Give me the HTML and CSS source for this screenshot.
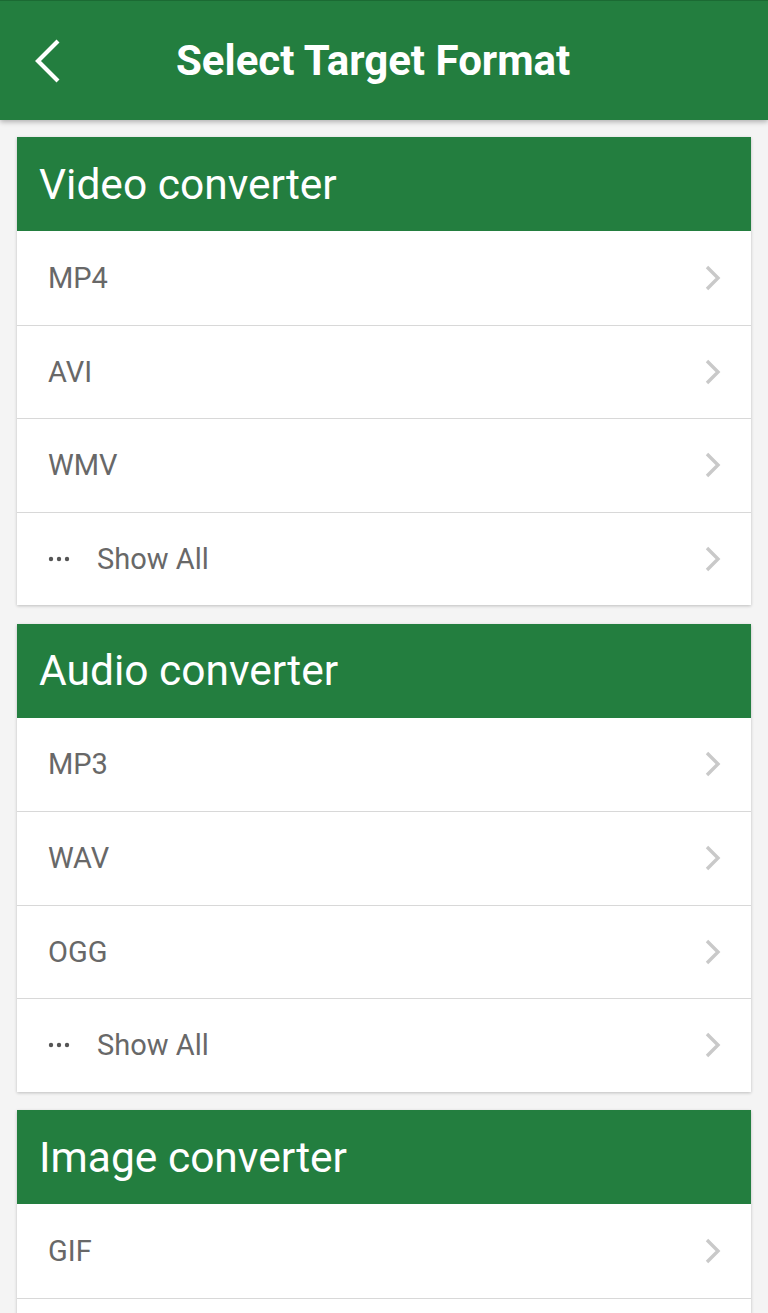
FILE: index.html
```html
<!DOCTYPE html>
<html>
<head>
<meta charset="utf-8">
<link rel="stylesheet" href="styles.css">
</head>
<body>
<header class="appbar">
  <svg class="back" width="30" height="48" viewBox="0 0 30 48"><polyline points="25,4 5,24 25,44" fill="none" stroke="#fff" stroke-width="4.2" stroke-linecap="butt" stroke-linejoin="miter"/></svg>
  <h1 class="title">Select Target Format</h1>
</header>
<main class="content">
  <section class="card">
    <h2 class="card-head">Video converter</h2>
    <div class="row"><span class="label">MP4</span><svg class="chev" viewBox="0 0 18 28"><polyline points="3,3 14,14 3,25" fill="none" stroke="#c9c9c9" stroke-width="3.4"/></svg></div>
    <div class="row"><span class="label">AVI</span><svg class="chev" viewBox="0 0 18 28"><polyline points="3,3 14,14 3,25" fill="none" stroke="#c9c9c9" stroke-width="3.4"/></svg></div>
    <div class="row"><span class="label">WMV</span><svg class="chev" viewBox="0 0 18 28"><polyline points="3,3 14,14 3,25" fill="none" stroke="#c9c9c9" stroke-width="3.4"/></svg></div>
    <div class="row"><svg class="dots" viewBox="0 0 22 6"><circle cx="3" cy="3" r="2.2" fill="#555"/><circle cx="11" cy="3" r="2.2" fill="#555"/><circle cx="19" cy="3" r="2.2" fill="#555"/></svg><span class="label">Show All</span><svg class="chev" viewBox="0 0 18 28"><polyline points="3,3 14,14 3,25" fill="none" stroke="#c9c9c9" stroke-width="3.4"/></svg></div>
  </section>
  <section class="card">
    <h2 class="card-head">Audio converter</h2>
    <div class="row"><span class="label">MP3</span><svg class="chev" viewBox="0 0 18 28"><polyline points="3,3 14,14 3,25" fill="none" stroke="#c9c9c9" stroke-width="3.4"/></svg></div>
    <div class="row"><span class="label">WAV</span><svg class="chev" viewBox="0 0 18 28"><polyline points="3,3 14,14 3,25" fill="none" stroke="#c9c9c9" stroke-width="3.4"/></svg></div>
    <div class="row"><span class="label">OGG</span><svg class="chev" viewBox="0 0 18 28"><polyline points="3,3 14,14 3,25" fill="none" stroke="#c9c9c9" stroke-width="3.4"/></svg></div>
    <div class="row"><svg class="dots" viewBox="0 0 22 6"><circle cx="3" cy="3" r="2.2" fill="#555"/><circle cx="11" cy="3" r="2.2" fill="#555"/><circle cx="19" cy="3" r="2.2" fill="#555"/></svg><span class="label">Show All</span><svg class="chev" viewBox="0 0 18 28"><polyline points="3,3 14,14 3,25" fill="none" stroke="#c9c9c9" stroke-width="3.4"/></svg></div>
  </section>
  <section class="card">
    <h2 class="card-head">Image converter</h2>
    <div class="row"><span class="label">GIF</span><svg class="chev" viewBox="0 0 18 28"><polyline points="3,3 14,14 3,25" fill="none" stroke="#c9c9c9" stroke-width="3.4"/></svg></div>
    <div class="row"></div>
  </section>
</main>
</body>
</html>
```

FILE: styles.css
```css
* { box-sizing: border-box; }
html, body {
  margin: 0;
  padding: 0;
  background: #f4f4f4;
  font-family: Roboto, "Liberation Sans", Arial, sans-serif;
  height: 1313px;
  overflow: hidden;
}
.appbar {
  height: 120px;
  background: #237e3f;
  border-top: 1px solid #1b6a33;
  display: flex;
  align-items: center;
  padding-left: 33px;
  box-shadow: 0 2px 5px rgba(0,0,0,0.28);
  position: relative;
  z-index: 2;
}
.back {
  width: 30px;
  height: 48px;
  flex: none;
}
.title {
  margin: 0 0 0 113px;
  color: #fff;
  font-size: 42px;
  font-weight: 700;
  letter-spacing: 0;
}
.content {
  padding: 17px 17px 0 17px;
  display: flex;
  flex-direction: column;
  gap: 18.5px;
}
.card {
  background: #fff;
  box-shadow: 0 1px 3px rgba(0,0,0,0.22);
}
.card-head {
  margin: 0;
  height: 94px;
  background: #237e3f;
  color: #fff;
  font-size: 42.5px;
  font-weight: 400;
  display: flex;
  align-items: center;
  padding-left: 22px;
}
.row {
  height: 93.5px;
  display: flex;
  align-items: center;
  padding: 0 29px 0 31px;
  border-top: 1px solid #d8d8d8;
}
.card-head + .row { border-top: none; }
.label {
  color: #686868;
  font-size: 29px;
  flex: 1;
}
.dots {
  width: 22px;
  height: 6px;
  margin-right: 27px;
  flex: none;
}
.chev {
  width: 18px;
  height: 28px;
  flex: none;
}
```
